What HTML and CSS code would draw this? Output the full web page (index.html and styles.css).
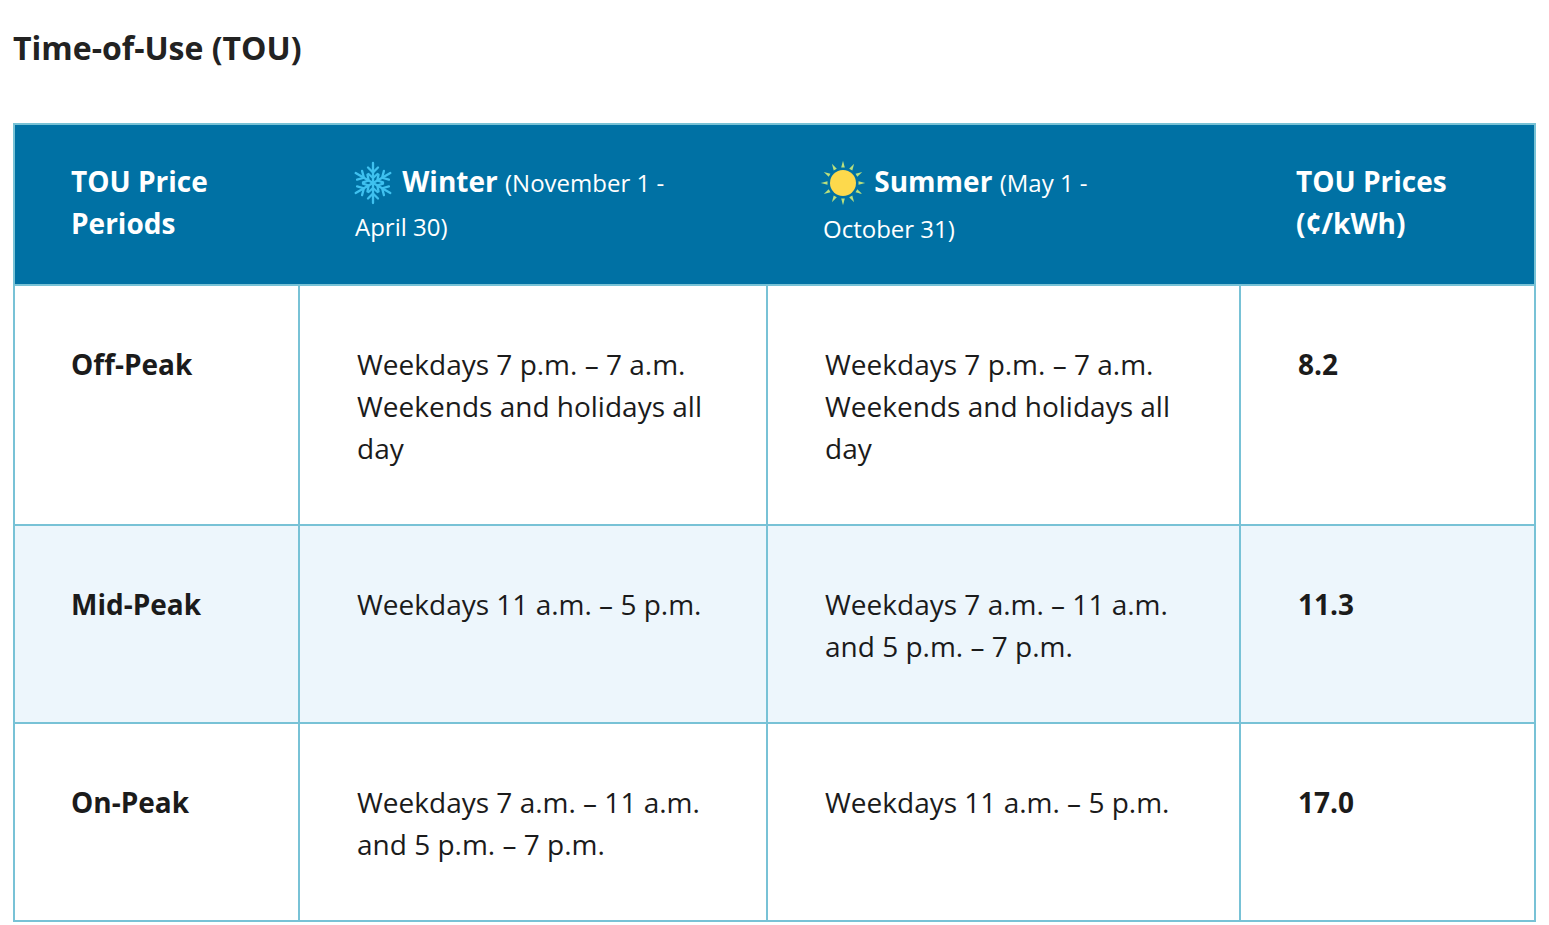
FILE: index.html
```html
<!DOCTYPE html>
<html lang="en">
<head>
<meta charset="utf-8">
<title>Time-of-Use (TOU)</title>
<link rel="stylesheet" href="styles.css">
</head>
<body>
<h2 class="title">Time-of-Use (TOU)</h2>
<table class="tou">
  <colgroup>
    <col class="c1"><col class="c2"><col class="c3"><col class="c4">
  </colgroup>
  <thead>
    <tr>
      <th>TOU Price<br>Periods</th>
      <th><svg class="icon snow" viewBox="0 0 44 44" aria-hidden="true">
          <g stroke="#3fc1ef" stroke-width="2.3" stroke-linecap="round" stroke-linejoin="round" fill="none">
            <g id="arm">
              <line x1="22" y1="22" x2="22" y2="2"/>
              <polyline points="17,6.5 22,11.5 27,6.5"/>
              <polyline points="17.5,13 22,17 26.5,13"/>
            </g>
            <use href="#arm" transform="rotate(60 22 22)"/>
            <use href="#arm" transform="rotate(120 22 22)"/>
            <use href="#arm" transform="rotate(180 22 22)"/>
            <use href="#arm" transform="rotate(240 22 22)"/>
            <use href="#arm" transform="rotate(300 22 22)"/>
          </g>
        </svg> <span class="season">Winter</span> <span class="range">(November 1 -<br>April 30)</span></th>
      <th><svg class="icon sun" viewBox="0 0 46 46" aria-hidden="true">
          <g fill="#b9e07e">
            <polygon id="ray" points="21.2,7.5 23,0.8 24.8,7.5"/>
            <use href="#ray" transform="rotate(30 23 23)"/>
            <use href="#ray" transform="rotate(60 23 23)"/>
            <use href="#ray" transform="rotate(90 23 23)"/>
            <use href="#ray" transform="rotate(120 23 23)"/>
            <use href="#ray" transform="rotate(150 23 23)"/>
            <use href="#ray" transform="rotate(180 23 23)"/>
            <use href="#ray" transform="rotate(210 23 23)"/>
            <use href="#ray" transform="rotate(240 23 23)"/>
            <use href="#ray" transform="rotate(270 23 23)"/>
            <use href="#ray" transform="rotate(300 23 23)"/>
            <use href="#ray" transform="rotate(330 23 23)"/>
          </g>
          <circle cx="23" cy="23" r="13" fill="#fdd94c"/>
        </svg> <span class="season">Summer</span> <span class="range">(May 1 -<br>October 31)</span></th>
      <th>TOU Prices<br>(¢/kWh)</th>
    </tr>
  </thead>
  <tbody>
    <tr>
      <td class="label">Off-Peak</td>
      <td>Weekdays 7 p.m. – 7 a.m.<br>Weekends and holidays all day</td>
      <td>Weekdays 7 p.m. – 7 a.m.<br>Weekends and holidays all day</td>
      <td class="label">8.2</td>
    </tr>
    <tr class="alt">
      <td class="label">Mid-Peak</td>
      <td>Weekdays 11 a.m. – 5 p.m.</td>
      <td>Weekdays 7 a.m. – 11 a.m.<br>and 5 p.m. – 7 p.m.</td>
      <td class="label">11.3</td>
    </tr>
    <tr>
      <td class="label">On-Peak</td>
      <td>Weekdays 7 a.m. – 11 a.m.<br>and 5 p.m. – 7 p.m.</td>
      <td>Weekdays 11 a.m. – 5 p.m.</td>
      <td class="label">17.0</td>
    </tr>
  </tbody>
</table>
</body>
</html>
```

FILE: styles.css
```css
html, body {
  margin: 0;
  padding: 0;
  background: #ffffff;
}
body {
  font-family: "Open Sans", "Noto Sans", sans-serif;
  color: #1b1b1b;
  padding: 0 13px;
}
.title {
  margin: 0;
  padding-top: 28px;
  font-size: 32px;
  line-height: 40px;
  font-weight: 700;
  color: #222;
  height: 123px;
  box-sizing: border-box;
}
.tou {
  width: 1523px;
  border-collapse: separate;
  border-spacing: 0;
  border: 2px solid #78c2d6;
  table-layout: fixed;
}
.c1 { width: 283px; }
.c2 { width: 468px; }
.c3 { width: 473px; }
.c4 { width: 295px; }

.tou th {
  background: #0071a4;
  color: #fff;
  text-align: left;
  vertical-align: top;
  font-size: 28px;
  font-weight: 700;
  line-height: 42px;
  padding: 35px 40px 34px 57px;
}
.tou th:first-child { padding-left: 56px; }
.tou th .range {
  font-weight: 400;
  font-size: 24px;
}
.tou th .season {
  font-size: 28px;
}
.icon {
  vertical-align: middle;
  position: relative;
}
.snow {
  width: 44px;
  height: 44px;
  margin: -4px 0 -4px -4px;
  top: -2px;
}
.sun {
  width: 46px;
  height: 46px;
  margin: -2px 1px -2px -3px;
  top: -2px;
}

.tou td {
  vertical-align: top;
  font-size: 28px;
  line-height: 42px;
  padding: 57px 50px 55px 57px;
  border-top: 2px solid #78c2d6;
  border-left: 2px solid #78c2d6;
}
.tou td:first-child { border-left: none; padding-left: 56px; }
.tou td.label { font-weight: 700; }
.tou tr.alt td { background: #edf6fc; }
```
